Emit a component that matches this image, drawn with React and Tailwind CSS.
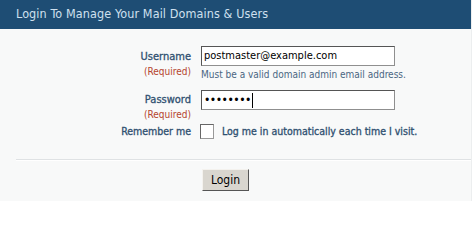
export default function App() {
  const font = { fontFamily: '"DejaVu Sans Condensed", "DejaVu Sans", Verdana, sans-serif', fontStretch: "condensed" };
  return (
    <div className="w-[474px] h-[205px] bg-white overflow-hidden" style={font}>
      <div className="w-[472px] h-[201px] bg-[#f8f9f9] border-r border-[#eceeef]">
        <div className="h-[29px] bg-[#1e4d74] pl-[16px] flex items-center text-[12.5px] tracking-[0.1px] text-[#cfe0ef]">
          Login To Manage Your Mail Domains &amp; Users
        </div>
        <div className="pt-[17px]">
          <div className="flex">
            <div className="w-[191px] text-right pt-[3px] leading-[15px] whitespace-nowrap">
              <div className="text-[11px] text-[#2f5070] [-webkit-text-stroke:0.3px_#2f5070]">Username</div>
              <div className="text-[10px] text-[#b5452f]">(Required)</div>
            </div>
            <div className="ml-[10px]">
              <div className="w-[194px] h-[20px] bg-white border border-[#8f8f8f] border-t-[#555] border-l-[#555] px-[2px] flex items-center text-[11px] text-black whitespace-nowrap">
                postmaster@example.com
              </div>
              <div className="text-[10px] text-[#4a6682] mt-[3px] leading-[12px] whitespace-nowrap">Must be a valid domain admin email address.</div>
            </div>
          </div>
          <div className="flex mt-[9px]">
            <div className="w-[191px] text-right pt-[2px] leading-[15px] whitespace-nowrap">
              <div className="text-[11px] text-[#2f5070] [-webkit-text-stroke:0.3px_#2f5070]">Password</div>
              <div className="text-[10px] text-[#b5452f]">(Required)</div>
            </div>
            <div className="ml-[10px]">
              <div className="w-[194px] h-[20px] bg-white border border-[#8f8f8f] border-t-[#555] border-l-[#555] px-[2px] flex items-center text-[12px] text-black">
                <span className="tracking-[-0.5px]">••••••••</span>
                <span className="inline-block w-px h-[15px] bg-black ml-[1px]"></span>
              </div>
            </div>
          </div>
          <div className="flex items-center mt-[2px] whitespace-nowrap">
            <div className="w-[191px] text-right text-[10.5px] text-[#2f5070] [-webkit-text-stroke:0.3px_#2f5070]">Remember me</div>
            <div className="ml-[9px] w-[14px] h-[15px] bg-white border border-[#999] border-t-[#666] border-l-[#666] shrink-0"></div>
            <div className="ml-[8px] text-[10.5px] text-[#2f5070] [-webkit-text-stroke:0.3px_#2f5070]">Log me in automatically each time I visit.</div>
          </div>
          <div className="ml-[16px] mt-[19px] h-[2px] bg-[#dfe2e4] border-b border-white"></div>
          <div className="pl-[202px] pt-[6px]">
            <button
              className="w-[47px] h-[22px] bg-[#d9d6cf] border border-[#f4f2ee] border-r-[#555] border-b-[#555] text-[12px] text-black"
              style={font}
            >
              Login
            </button>
          </div>
        </div>
      </div>
    </div>
  );
}
